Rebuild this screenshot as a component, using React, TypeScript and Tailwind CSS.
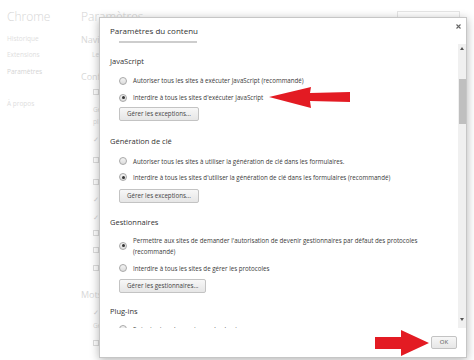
function Radio({ checked }: { checked?: boolean }) {
  return (
    <span className="w-[8px] h-[8px] rounded-full border border-[#a8a8a8] bg-linear-to-b from-[#f4f4f4] to-[#dcdcdc] flex items-center justify-center shrink-0">
      {checked && <span className="w-[3px] h-[3px] rounded-full bg-[#333]" />}
    </span>
  );
}

function Option({ checked, children, h = "h-[16px]", mt = "mt-0" }: { checked?: boolean; children: React.ReactNode; h?: string; mt?: string }) {
  return (
    <div className={`${h} ${mt} shrink-0 flex items-center gap-[6px] pl-[19px] whitespace-nowrap`}>
      <Radio checked={checked} />
      <span className="text-[6.2px] leading-[11px] text-[#3a3a3a]">{children}</span>
    </div>
  );
}

function Btn({ children, mt }: { children: React.ReactNode; mt: string }) {
  return (
    <div className={`${mt} shrink-0 pl-[19px] flex`}>
      <span className="h-[14px] px-[7px] flex items-center rounded-[2px] border border-[#c3c3c3] bg-linear-to-b from-[#f7f7f7] to-[#e6e6e6] text-[6.2px] text-[#444] whitespace-nowrap">
        {children}
      </span>
    </div>
  );
}

function Heading({ children, mt }: { children: React.ReactNode; mt: string }) {
  return <div className={`${mt} shrink-0 h-[12px] flex items-center pl-[10px] text-[7.5px] text-[#333]`}>{children}</div>;
}

function Box() {
  return <span className="block w-[6px] h-[6px] border border-[#dcdcdc]" />;
}

function Check() {
  return <span className="block text-[7px] leading-[10px] text-[#d2d2d2]">✓</span>;
}

export default function App() {
  return (
    <div className="relative w-[474px] h-[360px] overflow-hidden bg-white font-['Open_Sans',sans-serif]">
      {/* page behind the overlay */}
      <div className="flex h-full">
        <div className="w-[81px] pl-[7px] flex flex-col">
          <div className="h-[34px] flex items-center text-[12px] font-light text-[#d6d6d6]">Chrome</div>
          <div className="mt-[0px] h-[10px] flex items-center text-[6.5px] text-[#dedede]">Historique</div>
          <div className="mt-[6px] h-[10px] flex items-center text-[6.5px] text-[#dedede]">Extensions</div>
          <div className="mt-[7px] h-[10px] flex items-center text-[6.5px] text-[#d4d4d4]">Paramètres</div>
          <div className="mt-[22px] h-[10px] flex items-center text-[6.5px] text-[#dedede]">À propos</div>
        </div>
        <div className="flex-1 flex flex-col">
          <div className="h-[34px] flex items-center justify-between">
            <span className="text-[12px] font-light text-[#d3d3d3]">Paramètres</span>
            <span className="mr-[14px] w-[63px] h-[12px] border border-[#e6e6e6]" />
          </div>
          <div className="w-[18px] overflow-hidden whitespace-nowrap flex flex-col">
            <div className="mt-[1px] h-[10px] flex items-center text-[9px] text-[#d8d8d8]">Navigation</div>
            <div className="mt-[5px] h-[10px] flex items-center pl-[11px] text-[6.5px] text-[#d8d8d8]">Le</div>
            <div className="mt-[12px] h-[10px] flex items-center text-[9px] text-[#d8d8d8]">Configuration</div>
            <div className="mt-[5px] h-[10px] flex items-center pl-[12px]"><Box /></div>
            <div className="mt-[8px] h-[10px] flex items-center pl-[12px] text-[6.5px] text-[#dadada]">Gé</div>
            <div className="mt-[2px] h-[10px] flex items-center pl-[12px] text-[6.5px] text-[#dadada]">pl</div>
            <div className="mt-[8px] h-[10px] flex items-center pl-[12px]"><Check /></div>
            <div className="mt-[10px] h-[10px] flex items-center pl-[12px]"><Box /></div>
            <div className="mt-[12px] h-[10px] flex items-center pl-[12px]"><Box /></div>
            <div className="mt-[8px] h-[10px] flex items-center pl-[12px]"><Check /></div>
            <div className="mt-[8px] h-[10px] flex items-center pl-[12px]"><Check /></div>
            <div className="mt-[5px] h-[10px] flex items-center pl-[12px]"><Box /></div>
            <div className="mt-[7px] h-[10px] flex items-center pl-[12px]"><Box /></div>
            <div className="mt-[8px] h-[10px] flex items-center pl-[12px]"><Box /></div>
            <div className="mt-[17px] h-[10px] flex items-center text-[9px] text-[#d8d8d8]">Mots</div>
            <div className="mt-[8px] h-[10px] flex items-center pl-[12px]"><Check /></div>
            <div className="mt-[3px] h-[10px] flex items-center pl-[12px] text-[6.5px] text-[#dadada]">Gé</div>
            <div className="mt-[7px] h-[10px] flex items-center pl-[12px]"><Box /></div>
          </div>
        </div>
      </div>

      {/* dialog */}
      <div className="absolute left-[99px] top-[17px] w-[368px] h-[341px] bg-white border border-[#c6c6c6] shadow-[0_2px_9px_rgba(0,0,0,0.3)] flex flex-col">
        <div className="h-[26px] shrink-0 flex flex-col">
          <div className="flex justify-between">
            <span className="pl-[10px] pt-[7px] text-[8px] leading-[12px] text-[#333]">Paramètres du contenu</span>
            <svg className="mt-[6px] mr-[5px]" width="5" height="5" viewBox="0 0 5 5">
              <path d="M0.5 0.5L4.5 4.5M4.5 0.5L0.5 4.5" stroke="#666" strokeWidth="1.1" />
            </svg>
          </div>
          <div className="mt-auto mb-[1px] ml-[19px] w-[78px] h-[2px] bg-[#cdcdcd]" />
        </div>

        <div className="flex-1 min-h-0 flex overflow-hidden">
          <div className="flex-1 flex flex-col overflow-hidden">
            <Heading mt="mt-[12px]">JavaScript</Heading>
            <Option mt="mt-[4px]" h="h-[17px]">Autoriser tous les sites à exécuter JavaScript (recommandé)</Option>
            <Option checked h="h-[17px]">Interdire à tous les sites d'exécuter JavaScript</Option>
            <Btn mt="mt-[1px]">Gérer les exceptions...</Btn>

            <Heading mt="mt-[15px]">Génération de clé</Heading>
            <Option mt="mt-[5px]">Autoriser tous les sites à utiliser la génération de clé dans les formulaires.</Option>
            <Option checked>Interdire à tous les sites d'utiliser la génération de clé dans les formulaires (recommandé)</Option>
            <Btn mt="mt-[4px]">Gérer les exceptions...</Btn>

            <Heading mt="mt-[14px]">Gestionnaires</Heading>
            <Option checked mt="mt-[5px]" h="h-[23px]">
              Permettre aux sites de demander l'autorisation de devenir gestionnaires par défaut des protocoles
              <br />
              (recommandé)
            </Option>
            <Option mt="mt-[3px]">Interdire à tous les sites de gérer les protocoles</Option>
            <Btn mt="mt-[3px]">Gérer les gestionnaires...</Btn>

            <Heading mt="mt-[13px]">Plug-ins</Heading>
            <Option mt="mt-[3px]">Exécuter tous les contenus de plug-in</Option>
          </div>

          <div className="w-[8px] bg-[#f0f0f0] flex flex-col items-center">
            <div className="h-[8px] flex items-center">
              <span className="w-0 h-0 border-l-[2.5px] border-r-[2.5px] border-b-[3px] border-l-transparent border-r-transparent border-b-[#555]" />
            </div>
            <div className="mt-[27px] w-[7px] h-[45px] bg-[#bfbfbf]" />
            <div className="mt-auto h-[10px] flex items-start">
              <span className="w-0 h-0 border-l-[2.5px] border-r-[2.5px] border-t-[3px] border-l-transparent border-r-transparent border-t-[#555]" />
            </div>
          </div>
        </div>

        <div className="h-[29px] shrink-0 flex items-center justify-end pr-[9px]">
          <span className="w-[26px] h-[13px] flex items-center justify-center rounded-[2px] border border-[#c3c3c3] bg-linear-to-b from-[#f7f7f7] to-[#e6e6e6] text-[6px] text-[#555]">
            OK
          </span>
        </div>
      </div>

      {/* red annotation arrows */}
      <svg className="absolute inset-0 pointer-events-none" width="474" height="360" viewBox="0 0 474 360">
        <polygon points="269,97 311,87 310,93 350,92 350,102 310,101 311,108" fill="#e31b23" />
        <polygon points="375,337 401,337 401,330 429,343 401,356 401,349 375,349" fill="#e31b23" />
      </svg>
    </div>
  );
}
